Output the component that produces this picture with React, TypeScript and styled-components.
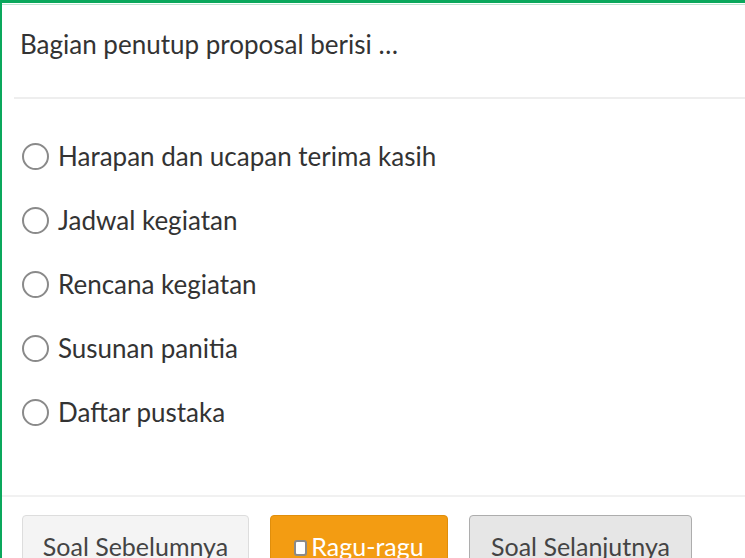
import React from 'react'
import styled, { createGlobalStyle } from 'styled-components'

const GlobalStyle = createGlobalStyle`
  html, body {
    margin: 0;
    padding: 0;
    background: #ffffff;
    overflow: hidden;
  }
  body {
    font-family: Lato, "Open Sans", sans-serif;
    color: #333333;
  }
`

const Panel = styled.div`
  width: 745px;
  min-height: 558px;
  box-sizing: border-box;
  border-top: 3px solid #0aa85c;
  border-left: 2px solid #0aa85c;
  background: #ffffff;
  display: flex;
  flex-direction: column;
`

const TopShade = styled.div`
  height: 1px;
  margin-top: 1px;
  background: #bfe6d1;
`

const Question = styled.div`
  padding: 23px 18px 0 18px;
  height: 69px;
  font-size: 26px;
  line-height: 32px;
  color: #333333;
`

const Divider = styled.div`
  height: 2px;
  margin-left: 12px;
  background: #eeeeee;
`

const Options = styled.div`
  display: flex;
  flex-direction: column;
  gap: 24px;
  padding: 37px 0 0 20px;
  height: 396px;
  box-sizing: border-box;
`

const Option = styled.label`
  display: flex;
  align-items: center;
  gap: 9px;
  height: 40px;
  font-size: 26px;
  color: #333333;
  cursor: pointer;
`

const Radio = styled.span`
  width: 23px;
  height: 23px;
  border-radius: 50%;
  border: 2.5px solid #8a8a8a;
  background: #ffffff;
  flex-shrink: 0;
`

const Footer = styled.div`
  border-top: 2px solid #f1f1f1;
  display: flex;
  padding: 18px 0 0 20px;
`

const Button = styled.button<{ $variant: 'default' | 'warning' | 'active' }>`
  font-family: Lato, "Open Sans", sans-serif;
  font-size: 25px;
  height: 56px;
  margin-right: 21px;
  padding: 15px 0 0 0;
  border-radius: 4px;
  display: flex;
  justify-content: center;
  align-items: flex-start;
  gap: 4px;
  border: 1px solid
    ${(p) => (p.$variant === 'warning' ? '#e08e0b' : p.$variant === 'active' ? '#adadad' : '#dddddd')};
  background: ${(p) => (p.$variant === 'warning' ? '#f39c12' : p.$variant === 'active' ? '#e6e6e6' : '#f4f4f4')};
  color: ${(p) => (p.$variant === 'warning' ? '#ffffff' : '#444444')};
`

const Check = styled.span`
  width: 9px;
  height: 12px;
  margin-top: 9px;
  border: 2.5px solid #8a8a8a;
  border-radius: 3px;
  background: #ffffff;
`

const options = [
  'Harapan dan ucapan terima kasih',
  'Jadwal kegiatan',
  'Rencana kegiatan',
  'Susunan panitia',
  'Daftar pustaka',
]

export default function App() {
  return (
    <>
      <GlobalStyle />
      <Panel>
        <TopShade />
        <Question>Bagian penutup proposal berisi …</Question>
        <Divider />
        <Options>
          {options.map((o) => (
            <Option key={o}>
              <Radio />
              {o}
            </Option>
          ))}
        </Options>
        <Footer>
          <Button $variant="default" style={{ width: 227 }}>Soal Sebelumnya</Button>
          <Button $variant="warning" style={{ width: 178 }}>
            <Check />
            Ragu-ragu
          </Button>
          <Button $variant="active" style={{ width: 223 }}>Soal Selanjutnya</Button>
        </Footer>
      </Panel>
    </>
  )
}
